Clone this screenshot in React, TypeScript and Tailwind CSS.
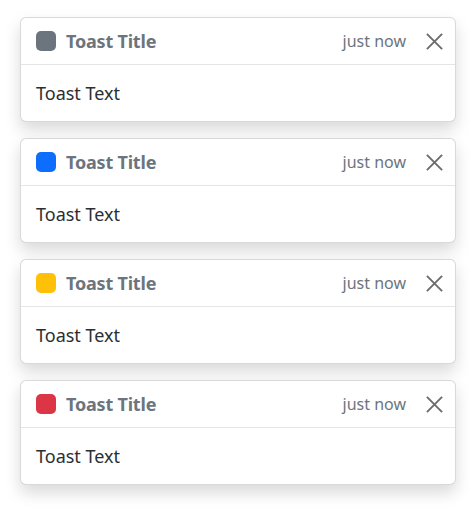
const toasts = ["bg-[#6c757d]", "bg-[#0d6efd]", "bg-[#ffc107]", "bg-[#dc3545]"];

function Toast({ color }: { color: string }) {
  return (
    <div className="w-[436px] rounded-md border border-black/15 bg-white shadow-[0_8px_16px_rgba(0,0,0,0.15)]">
      <div className="flex h-[47px] items-center border-b border-black/10 pl-[15px] pr-[11px] text-[#6c757d]">
        <div className={`h-5 w-5 rounded-[5px] ${color}`} />
        <span className="ml-[10px] text-[18px] font-bold tracking-[-0.2px]">Toast Title</span>
        <span className="ml-auto text-[16px]">just now</span>
        <button className="ml-[18px] flex h-5 w-5 items-center justify-center">
          <svg viewBox="0 0 20 20" className="h-[19px] w-[19px]" stroke="#6c6c6c" strokeWidth="2" fill="none">
            <path d="M2 2 L18 18 M18 2 L2 18" />
          </svg>
        </button>
      </div>
      <div className="flex h-[56px] items-center px-[15px] text-[18px] text-[#2b2f33]">Toast Text</div>
    </div>
  );
}

export default function App() {
  return (
    <div className="min-h-screen bg-white pt-[17px] pl-[20px] font-['Noto_Sans',sans-serif]">
      <div className="flex flex-col gap-[16px]">
        {toasts.map((c, i) => (
          <Toast key={i} color={c} />
        ))}
      </div>
    </div>
  );
}
